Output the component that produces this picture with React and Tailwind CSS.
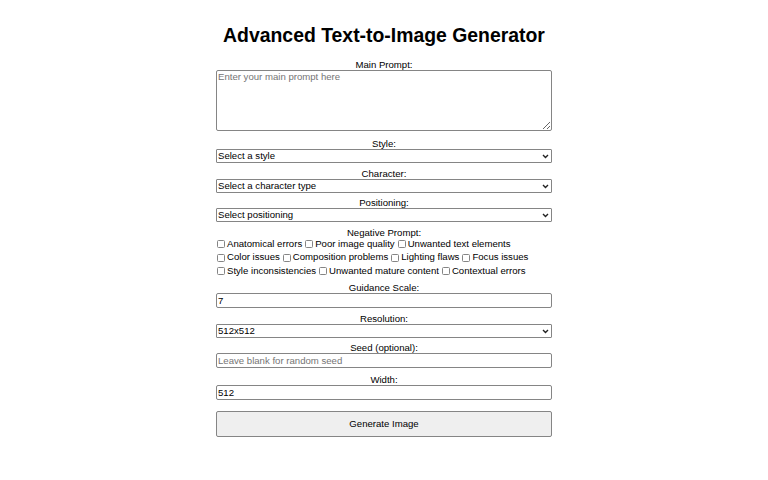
import { useState } from 'react'

const negativeOptions = [
    'Anatomical errors',
    'Poor image quality',
    'Unwanted text elements',
    'Color issues',
    'Composition problems',
    'Lighting flaws',
    'Focus issues',
    'Style inconsistencies',
    'Unwanted mature content',
    'Contextual errors',
]

function Label({ children }) {
    return (
        <label className="block text-center text-[9.6px] leading-[11px] text-black">
            {children}
        </label>
    )
}

function Select({ value, onChange, options }) {
    return (
        <div className="relative w-full">
            <select
                value={value}
                onChange={(e) => onChange(e.target.value)}
                className="block w-full h-[14px] appearance-none border border-[#858585] rounded-[1px] bg-white pl-[1px] text-[9.6px] leading-[12px] text-black outline-none"
            >
                {options.map((o) => (
                    <option key={o.value} value={o.value}>{o.label}</option>
                ))}
            </select>
            <svg className="absolute right-[3px] top-[5px] pointer-events-none" width="7" height="5" viewBox="0 0 7 5">
                <path d="M1 1 L3.5 3.5 L6 1" fill="none" stroke="#222" strokeWidth="1.4" />
            </svg>
        </div>
    )
}

export default function App() {
    const [prompt, setPrompt] = useState('')
    const [style, setStyle] = useState('')
    const [character, setCharacter] = useState('')
    const [positioning, setPositioning] = useState('')
    const [negatives, setNegatives] = useState([])
    const [guidance, setGuidance] = useState('7')
    const [resolution, setResolution] = useState('512x512')
    const [seed, setSeed] = useState('')
    const [width, setWidth] = useState('512')

    const toggleNegative = (item) => {
        setNegatives((prev) => prev.includes(item) ? prev.filter((n) => n !== item) : [...prev, item])
    }

    const inputClass = 'block w-full h-[15px] border border-[#858585] rounded-[2px] bg-white px-[1px] text-[9.6px] leading-[11px] text-black placeholder:text-[#757575] outline-none'

    return (
        <div className="min-h-[480px] bg-white flex justify-center font-['Liberation_Sans',Arial,sans-serif]">
            <div className="w-[336px] pt-[24px]">
                <h1 className="text-center text-[19.4px] leading-[22px] font-bold text-black mb-[13px]">
                    Advanced Text-to-Image Generator
                </h1>

                <div className="mb-[7px]">
                    <Label>Main Prompt:</Label>
                    <textarea
                        value={prompt}
                        onChange={(e) => setPrompt(e.target.value)}
                        placeholder="Enter your main prompt here"
                        className="block w-full h-[61px] border border-[#858585] rounded-[2px] bg-white px-[1px] text-[9.6px] leading-[11px] text-black placeholder:text-[#757575] outline-none"
                    />
                </div>

                <div className="mb-[4.5px]">
                    <Label>Style:</Label>
                    <Select value={style} onChange={setStyle} options={[{ value: '', label: 'Select a style' }]} />
                </div>

                <div className="mb-[4.5px]">
                    <Label>Character:</Label>
                    <Select value={character} onChange={setCharacter} options={[{ value: '', label: 'Select a character type' }]} />
                </div>

                <div className="mb-[4.5px]">
                    <Label>Positioning:</Label>
                    <Select value={positioning} onChange={setPositioning} options={[{ value: '', label: 'Select positioning' }]} />
                </div>

                <div className="mb-[5px]">
                    <Label>Negative Prompt:</Label>
                    <div className="flex flex-wrap pl-[1px] pt-[1px] gap-y-[2.5px]">
                        {negativeOptions.map((item) => (
                            <label key={item} className="flex items-center h-[11px] mr-[3px] text-[9.6px] text-black">
                                <input
                                    type="checkbox"
                                    checked={negatives.includes(item)}
                                    onChange={() => toggleNegative(item)}
                                    className="appearance-none w-[8px] h-[8px] border border-[#858585] rounded-[1.5px] bg-white mr-[2px]"
                                />
                                {item}
                            </label>
                        ))}
                    </div>
                </div>

                <div className="mb-[5px]">
                    <Label>Guidance Scale:</Label>
                    <input type="text" value={guidance} onChange={(e) => setGuidance(e.target.value)} className={inputClass} />
                </div>

                <div className="mb-[4.5px]">
                    <Label>Resolution:</Label>
                    <Select
                        value={resolution}
                        onChange={setResolution}
                        options={[
                            { value: '512x512', label: '512x512' },
                            { value: '768x768', label: '768x768' },
                            { value: '1024x1024', label: '1024x1024' },
                        ]}
                    />
                </div>

                <div className="mb-[6px]">
                    <Label>Seed (optional):</Label>
                    <input type="text" value={seed} onChange={(e) => setSeed(e.target.value)} placeholder="Leave blank for random seed" className={inputClass} />
                </div>

                <div className="mb-[11px]">
                    <Label>Width:</Label>
                    <input type="text" value={width} onChange={(e) => setWidth(e.target.value)} className={inputClass} />
                </div>

                <button
                    type="button"
                    className="block w-full h-[26px] border border-[#858585] rounded-[2px] bg-[#efefef] text-center text-[9.6px] text-black"
                >
                    Generate Image
                </button>
            </div>
        </div>
    )
}
